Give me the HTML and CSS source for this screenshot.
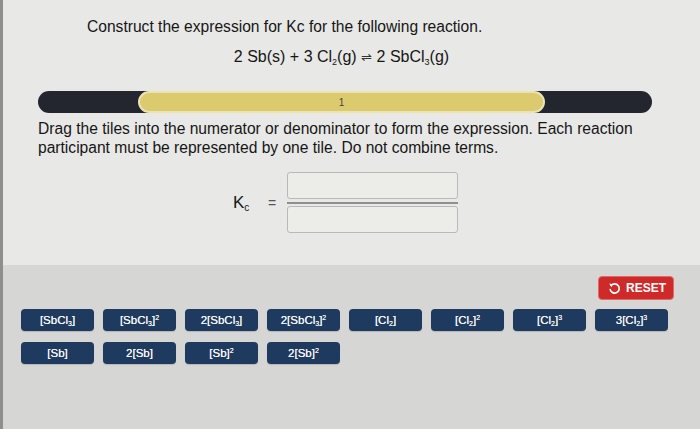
FILE: index.html
```html
<!DOCTYPE html>
<html>
<head>
<meta charset="utf-8">
<link rel="stylesheet" href="styles.css">
</head>
<body>
<div class="page">
  <section class="top">
    <p class="title">Construct the expression for Kc for the following reaction.</p>
    <p class="equation">2 Sb(s) + 3 Cl<sub>2</sub>(g) <span class="eq-arrow">&#8652;</span> 2 SbCl<sub>3</sub>(g)</p>
    <div class="progress">
      <div class="progress-fill">1</div>
    </div>
    <p class="instructions">Drag the tiles into the numerator or denominator to form the expression. Each reaction participant must be represented by one tile. Do not combine terms.</p>
    <div class="expression">
      <span class="kc">K<sub>c</sub></span>
      <span class="equals">=</span>
      <div class="fraction">
        <div class="slot"></div>
        <div class="fraction-line"></div>
        <div class="slot"></div>
      </div>
    </div>
  </section>
  <section class="bottom">
    <div class="reset-row">
      <button class="reset">
        <svg class="reset-icon" width="13" height="13" viewBox="0 0 13 13"><path d="M3.2 3.4 A4.6 4.6 0 1 1 2.2 7.6" fill="none" stroke="#fff" stroke-width="1.7" stroke-linecap="round"/><path d="M1.2 1.6 L4.6 2.2 L3.4 5.2 Z" fill="#fff"/></svg>
        RESET
      </button>
    </div>
    <div class="tiles">
      <div class="tile">[SbCl<sub>3</sub>]</div>
      <div class="tile">[SbCl<sub>3</sub>]<sup>2</sup></div>
      <div class="tile">2[SbCl<sub>3</sub>]</div>
      <div class="tile">2[SbCl<sub>3</sub>]<sup>2</sup></div>
      <div class="tile">[Cl<sub>2</sub>]</div>
      <div class="tile">[Cl<sub>2</sub>]<sup>2</sup></div>
      <div class="tile">[Cl<sub>2</sub>]<sup>3</sup></div>
      <div class="tile">3[Cl<sub>2</sub>]<sup>3</sup></div>
      <div class="tile">[Sb]</div>
      <div class="tile">2[Sb]</div>
      <div class="tile">[Sb]<sup>2</sup></div>
      <div class="tile">2[Sb]<sup>2</sup></div>
    </div>
  </section>
</div>
</body>
</html>
```
FILE: styles.css
```css
* { box-sizing: border-box; }
html, body { margin: 0; padding: 0; }
body {
  width: 700px;
  height: 429px;
  overflow: hidden;
  font-family: "Liberation Sans", Arial, sans-serif;
  color: #161616;
  background: #e4e4e2;
}
.page {
  width: 700px;
  height: 429px;
  display: flex;
  flex-direction: column;
  border-left: 3px solid #8e8e8c;
}
.top {
  height: 265px;
  background: #e8e8e6;
  padding-top: 17px;
}
.title {
  margin: 0 0 0 84px;
  font-size: 15.6px;
  line-height: 20px;
}
.equation {
  margin: 10px 0 0 0;
  text-align: center;
  padding-right: 20px;
  font-size: 16px;
  line-height: 20px;
}
.equation sub, .kc sub {
  font-size: 9px;
  vertical-align: -3px;
  line-height: 0;
}
.eq-arrow {
  font-size: 13px;
  color: #333;
}
.progress {
  margin: 23px 0 0 35px;
  width: 614px;
  height: 22px;
  background: #23262f;
  border-radius: 11px;
  padding-left: 100px;
}
.progress-fill {
  width: 407px;
  height: 22px;
  background: #dccb6e;
  border: 2px solid #ebe3b4;
  border-radius: 11px;
  text-align: center;
  font-size: 10px;
  line-height: 19px;
  color: #444;
}
.instructions {
  margin: 6px 0 0 35px;
  width: 620px;
  font-size: 15.6px;
  line-height: 19px;
}
.expression {
  display: flex;
  align-items: center;
  margin: 15px 0 0 230px;
}
.kc {
  font-size: 17px;
  width: 35px;
}
.kc sub { font-size: 10px; }
.equals {
  font-size: 14px;
  color: #555;
  width: 19px;
}
.fraction {
  display: flex;
  flex-direction: column;
  width: 171px;
}
.slot {
  height: 27px;
  border: 1px solid #b9b9b9;
  border-radius: 3px;
  background: #ecece9;
}
.fraction-line {
  height: 2px;
  background: #8f8f8f;
  margin: 3px 0 2px;
}
.bottom {
  flex: 1;
  background: #d6d6d5;
  padding-top: 11px;
}
.reset-row {
  display: flex;
  justify-content: flex-end;
  padding-right: 26px;
}
.reset {
  display: flex;
  align-items: center;
  gap: 5px;
  width: 76px;
  height: 24px;
  padding: 0 0 0 9px;
  border: 1px solid #e06a6a;
  border-radius: 4px;
  background: #cf2a2a;
  color: #fff;
  font-family: "Liberation Sans", Arial, sans-serif;
  font-size: 12px;
  font-weight: bold;
}
.reset-icon { flex: none; }
.tiles {
  display: grid;
  grid-template-columns: repeat(8, 73px);
  column-gap: 9px;
  row-gap: 11px;
  margin: 9px 0 0 18px;
}
.tile {
  height: 22px;
  background: #1f3a5f;
  border-radius: 4px;
  color: #f4f4f4;
  font-size: 11.5px;
  line-height: 22px;
  text-align: center;
  text-shadow: 0 0 0.4px #fff;
  box-shadow: 0 1px 1px rgba(0,0,0,0.15);
}
.tile sub {
  font-size: 7px;
  vertical-align: -2px;
  line-height: 0;
}
.tile sup {
  font-size: 7px;
  vertical-align: 4px;
  line-height: 0;
}
```
